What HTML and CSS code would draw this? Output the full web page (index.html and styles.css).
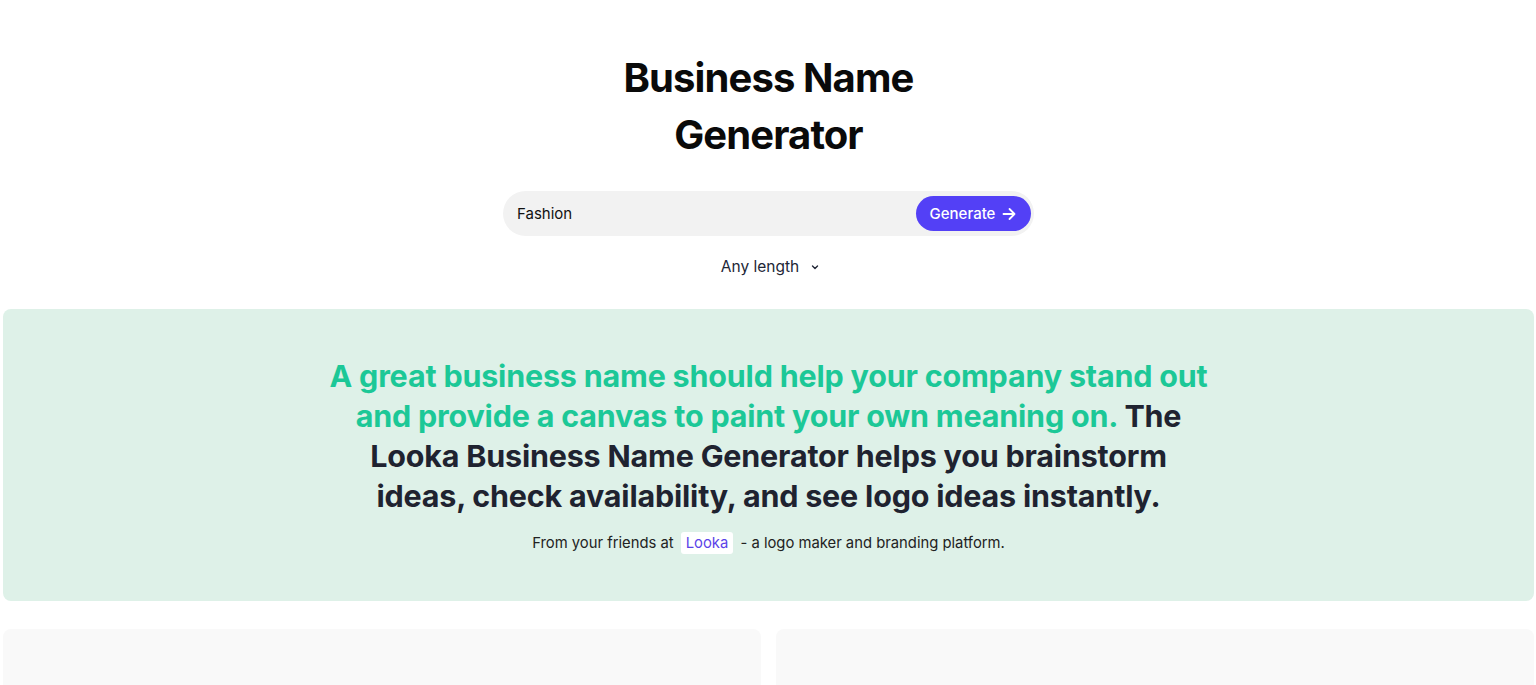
FILE: index.html
```html
<!DOCTYPE html>
<html lang="en">
<head>
    <meta charset="UTF-8">
    <title>Business Name Generator</title>
    <meta name="viewport" content="width=device-width, initial-scale=1.0">
    <link rel="stylesheet" href="styles.css">
</head>
<body>
    <div class="page">
        <!-- Cabecera con buscador -->
        <div class="hero">
            <h1>Business Name<br>Generator</h1>
            <form class="search" onsubmit="return false">
                <input type="text" value="Fashion">
                <button type="submit">Generate
                    <svg width="16" height="16" viewBox="0 0 16 16" fill="none" stroke="currentColor" stroke-width="1.8" stroke-linecap="round" stroke-linejoin="round"><path d="M2.5 8h11M8.5 3l5 5-5 5"/></svg>
                </button>
            </form>
            <div class="length">Any length
                <svg width="10" height="10" viewBox="0 0 10 10" fill="none" stroke="currentColor" stroke-width="1.4" stroke-linecap="round" stroke-linejoin="round"><path d="M2.5 4l2.5 2.5 2.5-2.5"/></svg>
            </div>
        </div>
        <!-- Bloque verde -->
        <div class="intro">
            <p class="intro-text"><span class="accent">A great business name should help your company stand out and provide a canvas to paint your own meaning on.</span> The Looka Business Name Generator helps you brainstorm ideas, check availability, and see logo ideas instantly.</p>
            <p class="friends">From your friends at <a href="#" class="looka">Looka</a> - a logo maker and branding platform.</p>
        </div>
        <div class="cards">
            <div class="card"></div>
            <div class="card"></div>
        </div>
    </div>
</body>
</html>
```

FILE: styles.css
```css
body { margin: 0; font-family: Inter, "Noto Sans", sans-serif; background: #fff; color: #111; overflow: hidden; }
.page { padding: 0 2px 0 3px; }
.hero {
    display: flex;
    flex-direction: column;
    align-items: center;
    padding-top: 49px;
}
.hero h1 {
    margin: 0;
    font-size: 40px;
    line-height: 57px;
    font-weight: 700;
    letter-spacing: -0.9px;
    text-align: center;
    color: #0a0a0a;
}
.search {
    margin-top: 28px;
    width: 531px;
    height: 45px;
    box-sizing: border-box;
    background: #f2f2f2;
    border-radius: 23px;
    display: flex;
    align-items: center;
    padding: 0 3px 0 14px;
}
.search input {
    flex: 1;
    border: none;
    background: transparent;
    font-family: inherit;
    font-size: 15px;
    color: #111;
    outline: none;
    padding: 0;
}
.search button {
    height: 35px;
    width: 115px;
    border: none;
    border-radius: 18px;
    background: #5340f6;
    color: #fff;
    font-family: inherit;
    font-size: 15px;
    font-weight: 500;
    display: flex;
    align-items: center;
    justify-content: center;
    gap: 6px;
    cursor: pointer;
}
.length {
    margin-top: 21px;
    font-size: 15.5px;
    color: #222636;
    display: flex;
    align-items: center;
    gap: 11px;
    padding-left: 4px;
}
.intro {
    margin-top: 33px;
    height: 292px;
    box-sizing: border-box;
    background: #def1e8;
    border-radius: 8px;
    padding-top: 47px;
    text-align: center;
}
.intro-text {
    margin: 0 auto;
    max-width: 888px;
    font-size: 30.5px;
    line-height: 40px;
    font-weight: 700;
    letter-spacing: -0.2px;
    color: #1f2330;
}
.accent { color: #1cc897; }
.friends {
    margin: 16px 0 0;
    font-size: 14.8px;
    color: #222;
}
.looka {
    display: inline-block;
    background: #fff;
    color: #5b43e8;
    text-decoration: none;
    padding: 2px 5px;
    border-radius: 3px;
    margin: 0 3px;
}
.cards {
    margin-top: 28px;
    display: flex;
    gap: 15px;
}
.card {
    flex: 1;
    height: 120px;
    background: #f9f9f9;
    border-radius: 8px;
}
```
